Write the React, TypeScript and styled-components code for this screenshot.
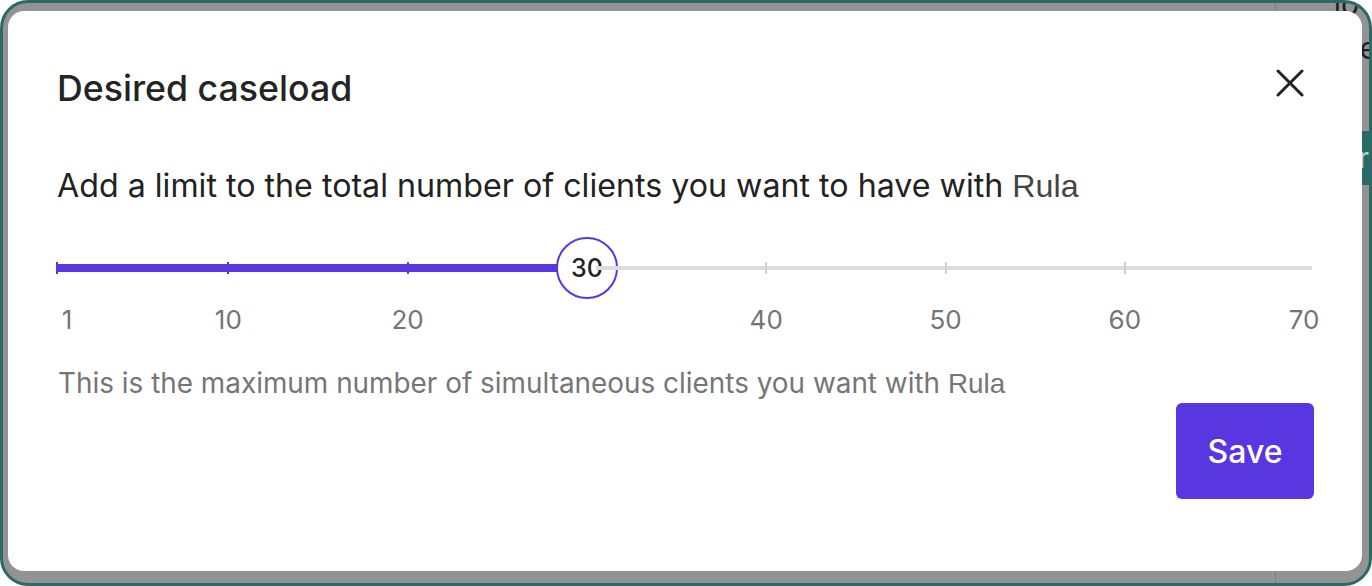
import React from "react";
import styled, { createGlobalStyle } from "styled-components";

const GlobalStyle = createGlobalStyle`
  html, body { margin: 0; padding: 0; background: #ffffff; }
  body { font-family: Inter, "Liberation Sans", sans-serif; }
  * { box-sizing: border-box; }
`;

const PURPLE = "#5937e0";
const MIN_OFFSET = -7;
const STEP = 17.93;
const pos = (v: number) => MIN_OFFSET + STEP * v;

const Frame = styled.div`
  position: relative;
  width: 1372px;
  height: 586px;
  border: 3px solid #2a6a66;
  border-radius: 28px;
  background: #939393;
  overflow: hidden;
`;

const Page = styled.div`
  display: grid;
  grid-template-columns: 1fr 94px;
  height: 100%;
`;

const PageMain = styled.div`
  font-size: 22px;
  color: #1e1e1e;
`;

const SidePanel = styled.div`
  border-left: 1px solid #7f7f7f;
  display: flex;
  flex-direction: column;
  align-items: flex-end;
  font-size: 30px;
  color: #1e1e1e;
`;

const SideText = styled.span<{ $top?: number; $right?: number }>`
  line-height: 30px;
  margin-right: ${(p) => p.$right ?? 0}px;
  margin-top: ${(p) => p.$top ?? 0}px;
`;

const SideButton = styled.div`
  width: 80px;
  height: 54px;
  background: #2a6a66;
  color: #b9d0cd;
  font-size: 28px;
  display: flex;
  align-items: center;
  justify-content: flex-end;
  margin-top: 68px;
`;

const Backdrop = styled.div`
  position: absolute;
  inset: 0;
  padding: 8px 7px 12px 5px;
  display: flex;
`;

const Modal = styled.div`
  flex: 1;
  background: #ffffff;
  border-radius: 16px;
  padding: 57px 48px 0 49px;
  display: flex;
  flex-direction: column;
`;

const Header = styled.div`
  display: flex;
  justify-content: space-between;
  align-items: flex-start;
  height: 40px;
`;

const Title = styled.h2`
  margin: 0;
  font-size: 35.7px;
  line-height: 40px;
  font-weight: 500;
  color: #242424;
`;

const CloseButton = styled.button`
  width: 28px;
  height: 28px;
  margin: 1px 10px 0 0;
  padding: 0;
  border: none;
  background: none;
  display: flex;
  cursor: pointer;
`;

const Description = styled.p`
  margin: 60px 0 0 0;
  font-size: 32.2px;
  line-height: 36px;
  color: #222222;
`;

const Brand = styled.span<{ $tone: string }>`
  font-family: "Liberation Sans", Arial, sans-serif;
  color: ${(p) => p.$tone};
`;

const SliderBox = styled.div`
  position: relative;
  height: 62px;
  margin: 33px 2px 0 -1px;
`;

const Rail = styled.div<{ $from: number; $layer: number }>`
  position: absolute;
  left: ${(p) => p.$from}px;
  right: 0;
  top: 29px;
  height: 4px;
  background: #dddddd;
  z-index: ${(p) => p.$layer};
`;

const Track = styled.div`
  position: absolute;
  left: 0;
  top: 27px;
  height: 8px;
  background: ${PURPLE};
  z-index: 1;
`;

const Tick = styled.div<{ $active: boolean }>`
  position: absolute;
  top: 25px;
  width: 2px;
  height: 12px;
  margin-left: -1px;
  background: ${(p) => (p.$active ? PURPLE : "#cfcfcf")};
  z-index: ${(p) => (p.$active ? 1 : 4)};
`;

const Thumb = styled.div`
  position: absolute;
  top: 0;
  width: 62px;
  height: 62px;
  margin-left: -31px;
  border-radius: 50%;
  border: 2px solid ${PURPLE};
  background: #ffffff;
  display: flex;
  align-items: center;
  justify-content: center;
  font-size: 25px;
  font-weight: 500;
  color: #222222;
  z-index: 2;
`;

const Labels = styled.div`
  position: relative;
  height: 32px;
  margin: 5px 2px 0 -1px;
`;

const Label = styled.span`
  position: absolute;
  top: 0;
  transform: translateX(-50%);
  font-size: 26px;
  line-height: 32px;
  color: #747474;
`;

const Helper = styled.p`
  margin: 31px 0 0 1px;
  font-size: 27.9px;
  line-height: 32px;
  color: #767676;
`;

const Footer = styled.div`
  display: flex;
  justify-content: flex-end;
  margin-top: 3px;
`;

const SaveButton = styled.button`
  width: 138px;
  height: 96px;
  border: none;
  border-radius: 6px;
  background: ${PURPLE};
  color: #ffffff;
  font-family: Inter, "Liberation Sans", sans-serif;
  font-size: 32px;
  font-weight: 500;
  cursor: pointer;
`;

const value = 30;
const ticks = [10, 20, 40, 50, 60];
const labels = [1, 10, 20, 40, 50, 60, 70];

export default function App() {
  const thumbX = pos(value);
  return (
    <>
      <GlobalStyle />
      <Frame>
        <Page>
          <PageMain />
          <SidePanel>
            <SideText $top={-14} $right={10}>lo</SideText>
            <SideText $top={14} $right={-8}>e</SideText>
            <SideButton>r</SideButton>
          </SidePanel>
        </Page>
        <Backdrop>
          <Modal>
            <Header>
              <Title>Desired caseload</Title>
              <CloseButton aria-label="Close">
                <svg width="28" height="28" viewBox="0 0 28 28">
                  <path
                    d="M2 2 L26 26 M26 2 L2 26"
                    stroke="#222222"
                    strokeWidth="3"
                    strokeLinecap="round"
                    fill="none"
                  />
                </svg>
              </CloseButton>
            </Header>
            <Description>
              Add a limit to the total number of clients you want to have with{" "}
              <Brand $tone="#444444">Rula</Brand>
            </Description>
            <SliderBox>
              <Rail $from={0} $layer={0} />
              <Track style={{ width: thumbX }} />
              <Tick $active style={{ left: 1 }} />
              {ticks.map((t) => (
                <Tick key={t} $active={t <= value} style={{ left: pos(t) }} />
              ))}
              <Thumb style={{ left: thumbX }}>{value}</Thumb>
              <Rail $from={thumbX + 9} $layer={3} />
            </SliderBox>
            <Labels>
              {labels.map((l) => (
                <Label key={l} style={{ left: pos(l) }}>
                  {l}
                </Label>
              ))}
            </Labels>
            <Helper>
              This is the maximum number of simultaneous clients you want with{" "}
              <Brand $tone="#767676">Rula</Brand>
            </Helper>
            <Footer>
              <SaveButton>Save</SaveButton>
            </Footer>
          </Modal>
        </Backdrop>
      </Frame>
    </>
  );
}
